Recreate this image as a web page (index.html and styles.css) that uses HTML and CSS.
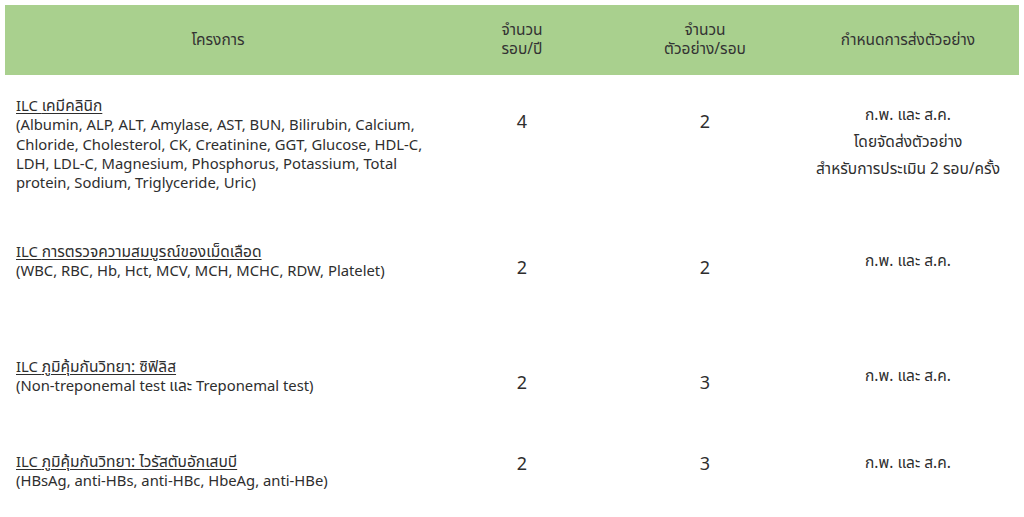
FILE: index.html
```html
<!DOCTYPE html>
<html lang="th">
<head>
<meta charset="utf-8">
<title>ILC</title>
<link rel="stylesheet" href="styles.css">
</head>
<body>
<div class="table">
  <div class="hd hd-first">โครงการ</div>
  <div class="hd">จำนวน<br>รอบ/ปี</div>
  <div class="hd">จำนวน<br>ตัวอย่าง/รอบ</div>
  <div class="hd">กำหนดการส่งตัวอย่าง</div>

  <div class="row r1">
    <div class="prog"><u>ILC <span class="th">เคมีคลินิก</span></u><br>(Albumin, ALP, ALT, Amylase, AST, BUN, Bilirubin, Calcium, Chloride, Cholesterol, CK, Creatinine, GGT, Glucose, HDL-C, LDH, LDL-C, Magnesium, Phosphorus, Potassium, Total protein, Sodium, Triglyceride, Uric)</div>
    <div class="num">4</div>
    <div class="num">2</div>
    <div class="sched">ก.พ. และ ส.ค.<br>โดยจัดส่งตัวอย่าง<br>สำหรับการประเมิน 2 รอบ/ครั้ง</div>
  </div>

  <div class="row r2">
    <div class="prog"><u>ILC <span class="th">การตรวจความสมบูรณ์ของเม็ดเลือด</span></u><br>(WBC, RBC, Hb, Hct, MCV, MCH, MCHC, RDW, Platelet)</div>
    <div class="num">2</div>
    <div class="num">2</div>
    <div class="sched">ก.พ. และ ส.ค.</div>
  </div>

  <div class="row r3">
    <div class="prog"><u>ILC <span class="th">ภูมิคุ้มกันวิทยา: ซิฟิลิส</span></u><br>(Non-treponemal test <span class="th">และ</span> Treponemal test)</div>
    <div class="num">2</div>
    <div class="num">3</div>
    <div class="sched">ก.พ. และ ส.ค.</div>
  </div>

  <div class="row r4">
    <div class="prog"><u>ILC <span class="th">ภูมิคุ้มกันวิทยา: ไวรัสตับอักเสบบี</span></u><br>(HBsAg, anti-HBs, anti-HBc, HbeAg, anti-HBe)</div>
    <div class="num">2</div>
    <div class="num">3</div>
    <div class="sched">ก.พ. และ ส.ค.</div>
  </div>
</div>
</body>
</html>
```
FILE: styles.css
```css
html, body {
  margin: 0;
  padding: 0;
  background: #ffffff;
}
body {
  padding: 5px 5px 0 5px;
  font-family: "Noto Sans Thai", "Noto Sans", "DejaVu Sans", sans-serif;
  color: #2e2e2e;
}
.table {
  display: grid;
  grid-template-columns: 426px 182px 184px 222px;
  width: 1014px;
}
.row {
  display: contents;
}
.hd {
  background: #a9d08e;
  height: 70px;
  display: flex;
  align-items: center;
  justify-content: center;
  text-align: center;
  font-family: "Noto Sans Thai", "DejaVu Sans", sans-serif;
  font-size: 15.5px;
  line-height: 19px;
  color: #333333;
}
.prog {
  padding: 22px 0 0 11px;
  font-size: 14.8px;
  line-height: 19.3px;
}
.prog .th {
  font-size: 15.5px;
}
.prog u {
  text-underline-offset: 2px;
}
.num {
  text-align: center;
  font-size: 18px;
  line-height: 24px;
  padding-top: 36px;
}
.sched {
  text-align: center;
  font-size: 15.5px;
  line-height: 27px;
  padding-top: 27px;
}
.r1 > div { height: 146px; box-sizing: border-box; }
.r2 > div { height: 115px; box-sizing: border-box; }
.r3 > div { height: 95px; box-sizing: border-box; }
.r4 > div { height: 86px; box-sizing: border-box; }
.r4 .num { padding-top: 22px; }
.r4 .sched { padding-top: 19px; }
```
